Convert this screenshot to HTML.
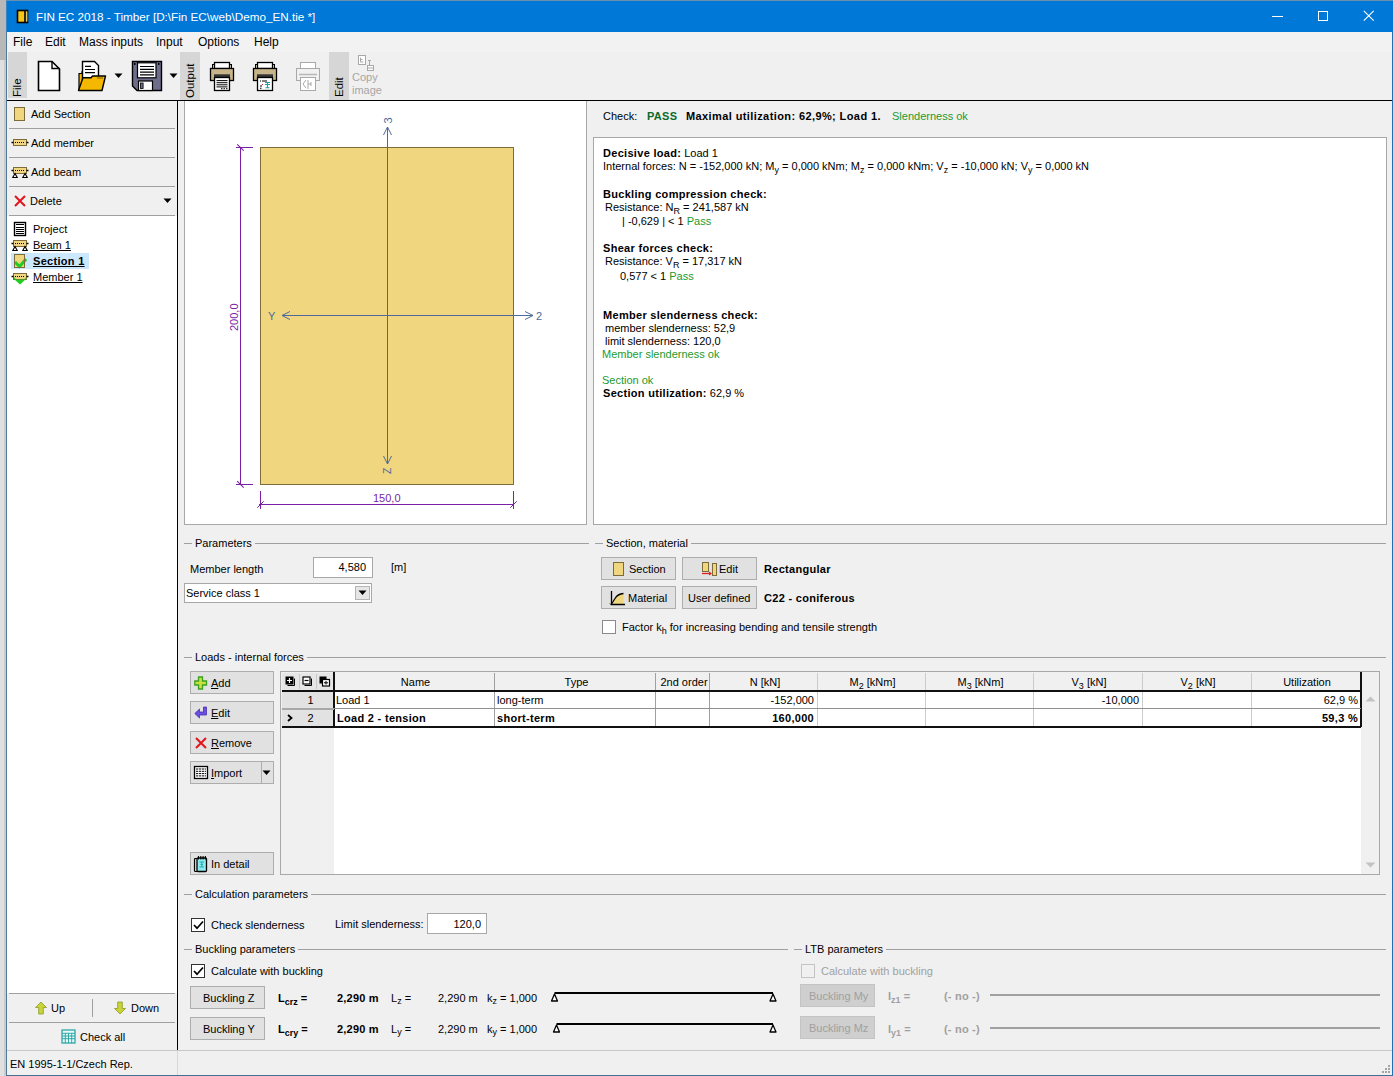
<!DOCTYPE html>
<html><head><meta charset="utf-8">
<style>
*{box-sizing:border-box;margin:0;padding:0}
html,body{width:1393px;height:1076px;overflow:hidden;background:#f0f0f0;font-family:"Liberation Sans",sans-serif;font-size:11px;color:#000}
.a{position:absolute}
.t{position:absolute;white-space:nowrap;line-height:15px;font-size:11px}
.b{font-weight:bold;letter-spacing:0.3px}
.hl{position:absolute;height:1px;background:#a0a0a0}
.vl{position:absolute;width:1px;background:#a0a0a0}
.btn{position:absolute;background:#e1e1e1;border:1px solid #adadad}
.grn{color:#1d9a2d}
sub{font-size:9px;vertical-align:-3px;line-height:0}
</style></head><body>
<!-- desktop strip -->
<div class="a" style="left:0;top:0;width:6px;height:1076px;background:#e0e0e0"></div>
<div class="a" style="left:4px;top:0;width:2px;height:1076px;background:#c9cbcd"></div>
<div class="a" style="left:0;top:0;width:6px;height:60px;background:#b8b8b8"></div>
<!-- window -->
<div class="a" style="left:6px;top:0;width:1387px;height:1076px;background:#f0f0f0;border-left:1px solid #4f7a9a;border-right:1px solid #1f70b4;border-bottom:1px solid #44708f"></div>
<!-- title bar -->
<div class="a" style="left:6px;top:0;width:1387px;height:32px;background:#0078d7;border-top:1px solid #6a90b0;border-left:1px solid #3a84c6"></div>
<div id="title" class="t" style="left:36px;top:9px;font-size:11.7px;line-height:15px;color:#fff">FIN EC 2018 - Timber [D:\Fin EC\web\Demo_EN.tie *]</div>
<!-- menu -->
<div class="a" style="left:7px;top:32px;width:1385px;height:20px;background:#f2f2f2"></div>
<div id="menu" class="t" style="left:13px;top:35px;font-size:12px;line-height:14px">
<span class="a" style="left:0">File</span><span class="a" style="left:32px">Edit</span><span class="a" style="left:66px">Mass inputs</span><span class="a" style="left:143px">Input</span><span class="a" style="left:185px">Options</span><span class="a" style="left:241px">Help</span></div>
<!-- toolbar line -->
<div class="a" style="left:7px;top:100px;width:1385px;height:1px;background:#000"></div>
<!-- left panel -->
<div class="a" style="left:7px;top:101px;width:170px;height:949px;background:#f0f0f0"></div>
<div class="a" style="left:177px;top:101px;width:1px;height:949px;background:#000"></div>
<div class="a" style="left:7px;top:216px;width:170px;height:777px;background:#fff"></div>
<div class="hl" style="left:9px;top:128px;width:166px"></div>
<div class="hl" style="left:9px;top:157px;width:166px"></div>
<div class="hl" style="left:9px;top:186px;width:166px"></div>
<div class="hl" style="left:9px;top:215px;width:166px"></div>
<div class="hl" style="left:9px;top:993px;width:166px"></div>
<div class="hl" style="left:9px;top:1022px;width:166px"></div>
<div class="vl" style="left:92px;top:999px;height:18px"></div>
<!-- status bar -->
<div class="a" style="left:7px;top:1050px;width:1385px;height:1px;background:#c8c8c8"></div>
<div class="a" style="left:177px;top:1051px;width:1px;height:24px;background:#d8d8d8"></div>
<!-- drawing panel -->
<div class="a" style="left:184px;top:101px;width:403px;height:424px;background:#fff;border:1px solid #a8a8a8;border-top:none"></div>
<!-- check text panel -->
<div class="a" style="left:593px;top:137px;width:794px;height:388px;background:#fff;border:1px solid #a8a8a8"></div>
<!-- group lines -->
<div class="hl" style="left:184px;top:543px;width:405px;background:#a0a0a0"></div>
<div class="hl" style="left:595px;top:543px;width:791px;background:#a0a0a0"></div>
<div class="hl" style="left:184px;top:657px;width:1202px;background:#a0a0a0"></div>
<div class="hl" style="left:184px;top:894px;width:1202px;background:#a0a0a0"></div>
<div class="hl" style="left:184px;top:949px;width:604px;background:#a0a0a0"></div>
<div class="hl" style="left:794px;top:949px;width:592px;background:#a0a0a0"></div>
<!-- table -->

<!-- LEFT PANEL TEXT -->
<div class="t" style="left:31px;top:107px">Add Section</div>
<div class="t" style="left:31px;top:136px">Add member</div>
<div class="t" style="left:31px;top:165px">Add beam</div>
<div class="t" style="left:30px;top:194px">Delete</div>
<div class="t" style="left:33px;top:222px">Project</div>
<div class="t" style="left:33px;top:238px;text-decoration:underline">Beam 1</div>
<div class="a" style="left:11px;top:253px;width:78px;height:16px;background:#cce8ff"></div>
<div class="t b" style="left:33px;top:254px;text-decoration:underline">Section 1</div>
<div class="t" style="left:33px;top:270px;text-decoration:underline">Member 1</div>
<div class="t" style="left:51px;top:1001px">Up</div>
<div class="t" style="left:131px;top:1001px">Down</div>
<div class="t" style="left:80px;top:1030px">Check all</div>
<div class="t" style="left:10px;top:1057px">EN 1995-1-1/Czech Rep.</div>
<!-- CHECK HEADER -->
<div class="t" style="left:603px;top:109px">Check:</div>
<div class="t b" style="left:647px;top:109px;color:#0d6b2a">PASS</div>
<div class="t b" style="left:686px;top:109px;letter-spacing:0.4px">Maximal utilization: 62,9%; Load 1.</div>
<div class="t grn" style="left:892px;top:109px">Slenderness ok</div>
<!-- CHECK TEXT -->
<div class="t" style="left:603px;top:146px"><span class="b">Decisive load:</span> Load 1</div>
<div class="t" style="left:603px;top:159px">Internal forces: N = -152,000 kN; M<sub>y</sub> = 0,000 kNm; M<sub>z</sub> = 0,000 kNm; V<sub>z</sub> = -10,000 kN; V<sub>y</sub> = 0,000 kN</div>
<div class="t b" style="left:603px;top:187px">Buckling compression check:</div>
<div class="t" style="left:605px;top:200px">Resistance: N<sub>R</sub> = 241,587 kN</div>
<div class="t" style="left:622px;top:214px">| -0,629 | &lt; 1 <span class="grn">Pass</span></div>
<div class="t b" style="left:603px;top:241px">Shear forces check:</div>
<div class="t" style="left:605px;top:254px">Resistance: V<sub>R</sub> = 17,317 kN</div>
<div class="t" style="left:620px;top:269px">0,577 &lt; 1 <span class="grn">Pass</span></div>
<div class="t b" style="left:603px;top:308px">Member slenderness check:</div>
<div class="t" style="left:605px;top:321px">member slenderness: 52,9</div>
<div class="t" style="left:605px;top:334px">limit slenderness: 120,0</div>
<div class="t grn" style="left:602px;top:347px">Member slenderness ok</div>
<div class="t grn" style="left:602px;top:373px">Section ok</div>
<div class="t" style="left:603px;top:386px"><span class="b">Section utilization:</span> 62,9 %</div>
<!-- PARAMETERS -->
<div class="t" style="left:192px;top:536px;background:#f0f0f0;padding:0 3px">Parameters</div>
<div class="t" style="left:190px;top:562px">Member length</div>
<div class="a" style="left:313px;top:557px;width:60px;height:21px;background:#fff;border:1px solid #a8a8a8"></div>
<div class="t" style="left:313px;top:560px;width:53px;text-align:right">4,580</div>
<div class="t" style="left:391px;top:560px">[m]</div>
<div class="a" style="left:184px;top:583px;width:188px;height:20px;background:#fff;border:1px solid #a8a8a8"></div>
<div class="t" style="left:186px;top:586px">Service class 1</div>
<div class="t" style="left:603px;top:536px;background:#f0f0f0;padding:0 3px">Section, material</div>
<div class="btn" style="left:601px;top:557px;width:75px;height:23px"></div>
<div class="btn" style="left:682px;top:557px;width:75px;height:23px"></div>
<div class="btn" style="left:601px;top:586px;width:75px;height:23px"></div>
<div class="btn" style="left:682px;top:586px;width:75px;height:23px"></div>
<div class="t" style="left:629px;top:562px">Section</div>
<div class="t" style="left:719px;top:562px">Edit</div>
<div class="t" style="left:628px;top:591px">Material</div>
<div class="t" style="left:688px;top:591px">User defined</div>
<div class="t b" style="left:764px;top:562px">Rectangular</div>
<div class="t b" style="left:764px;top:591px">C22 - coniferous</div>
<div class="a" style="left:602px;top:620px;width:14px;height:14px;background:#fff;border:1px solid #8a8a8a"></div>
<div class="t" style="left:622px;top:620px">Factor k<sub>h</sub> for increasing bending and tensile strength</div>
<!-- LOADS -->
<div class="t" style="left:192px;top:650px;background:#f0f0f0;padding:0 3px">Loads - internal forces</div>
<div class="btn" style="left:190px;top:671px;width:84px;height:23px"></div>
<div class="btn" style="left:190px;top:701px;width:84px;height:23px"></div>
<div class="btn" style="left:190px;top:731px;width:84px;height:23px"></div>
<div class="btn" style="left:190px;top:761px;width:84px;height:23px"></div>
<div class="btn" style="left:190px;top:852px;width:84px;height:23px"></div>
<div class="t" style="left:211px;top:676px"><u>A</u>dd</div>
<div class="t" style="left:211px;top:706px"><u>E</u>dit</div>
<div class="t" style="left:211px;top:736px"><u>R</u>emove</div>
<div class="t" style="left:211px;top:766px"><u>I</u>mport</div>
<div class="t" style="left:211px;top:857px">In detail</div>
<!-- TABLE -->
<div class="a" style="left:280px;top:671px;width:1100px;height:204px;background:#f0f0f0;border:1px solid #a8a8a8"></div>
<div class="a" style="left:334px;top:672px;width:1027px;height:202px;background:#fff"></div>
<div class="a" style="left:282px;top:673px;width:51px;height:17px;background:#e6e6e6"></div>
<div class="a" style="left:334px;top:672px;width:1027px;height:18px;background:#f0f0f0"></div>
<div class="a" style="left:282px;top:691px;width:51px;height:35px;background:#e2e2e2"></div>
<div class="a" style="left:299px;top:674px;width:1px;height:15px;background:#c8c8c8"></div>
<div class="a" style="left:316px;top:674px;width:1px;height:15px;background:#c8c8c8"></div>
<div class="a" style="left:494px;top:673px;width:1px;height:53px;background:#a0a0a0"></div>
<div class="a" style="left:655px;top:673px;width:1px;height:53px;background:#a0a0a0"></div>
<div class="a" style="left:709px;top:673px;width:1px;height:53px;background:#a0a0a0"></div>
<div class="a" style="left:817px;top:673px;width:1px;height:53px;background:#cccccc"></div>
<div class="a" style="left:925px;top:673px;width:1px;height:53px;background:#cccccc"></div>
<div class="a" style="left:1033px;top:673px;width:1px;height:53px;background:#cccccc"></div>
<div class="a" style="left:1142px;top:673px;width:1px;height:53px;background:#cccccc"></div>
<div class="a" style="left:1251px;top:673px;width:1px;height:53px;background:#cccccc"></div>
<div class="a" style="left:333px;top:672px;width:2px;height:55px;background:#111"></div>
<div class="a" style="left:1360px;top:672px;width:2px;height:55px;background:#111"></div>
<div class="a" style="left:282px;top:690px;width:1079px;height:2px;background:#111"></div>
<div class="a" style="left:282px;top:708px;width:52px;height:2px;background:#a8a8a8"></div>
<div class="a" style="left:334px;top:708px;width:1027px;height:1px;background:#909090"></div>
<div class="a" style="left:282px;top:726px;width:1079px;height:2px;background:#111"></div>
<div class="t" style="left:336px;top:675px;width:159px;text-align:center">Name</div>
<div class="t" style="left:497px;top:675px;width:159px;text-align:center">Type</div>
<div class="t" style="left:658px;top:675px;width:52px;text-align:center">2nd order</div>
<div class="t" style="left:712px;top:675px;width:106px;text-align:center">N [kN]</div>
<div class="t" style="left:820px;top:675px;width:105px;text-align:center">M<sub>2</sub> [kNm]</div>
<div class="t" style="left:927px;top:675px;width:107px;text-align:center">M<sub>3</sub> [kNm]</div>
<div class="t" style="left:1036px;top:675px;width:106px;text-align:center">V<sub>3</sub> [kN]</div>
<div class="t" style="left:1144px;top:675px;width:108px;text-align:center">V<sub>2</sub> [kN]</div>
<div class="t" style="left:1254px;top:675px;width:106px;text-align:center">Utilization</div>
<div class="t" style="left:282px;top:693px;width:51px;text-align:center;padding-left:6px">1</div>
<div class="t" style="left:282px;top:711px;width:51px;text-align:center;padding-left:6px">2</div>
<svg class="a" style="left:287px;top:714px" width="6" height="8"><path d="M1 1L4.5 4L1 7" fill="none" stroke="#000" stroke-width="1.8"/></svg>
<div class="t" style="left:336px;top:693px">Load 1</div>
<div class="t" style="left:497px;top:693px">long-term</div>
<div class="t" style="left:709px;top:693px;width:105px;text-align:right">-152,000</div>
<div class="t" style="left:1034px;top:693px;width:105px;text-align:right">-10,000</div>
<div class="t" style="left:1252px;top:693px;width:106px;text-align:right">62,9 %</div>
<div class="t b" style="left:337px;top:711px">Load 2 - tension</div>
<div class="t b" style="left:497px;top:711px">short-term</div>
<div class="t b" style="left:709px;top:711px;width:105px;text-align:right">160,000</div>
<div class="t b" style="left:1252px;top:711px;width:106px;text-align:right">59,3 %</div>
<svg class="a" style="left:285px;top:676px" width="12" height="11" viewBox="0 0 12 11">
<rect x="0.5" y="0.5" width="8" height="8" fill="#000"/><path d="M4.5 2V7M2 4.5H7" stroke="#fff" stroke-width="1.2"/>
<path d="M9.5 2.5V9.5H2.5" fill="none" stroke="#000" stroke-width="1"/></svg>
<svg class="a" style="left:302px;top:676px" width="12" height="11" viewBox="0 0 12 11">
<rect x="1" y="1" width="7" height="7" fill="#fff" stroke="#000" stroke-width="1.2"/><path d="M2.5 4.5H6.5" stroke="#000" stroke-width="1.2"/>
<path d="M9.5 2.5V9.5H2.5" fill="none" stroke="#000" stroke-width="1"/></svg>
<svg class="a" style="left:319px;top:676px" width="12" height="11" viewBox="0 0 12 11">
<rect x="0.5" y="0.5" width="7" height="7" fill="#000"/><rect x="3.5" y="3.5" width="7" height="6.5" fill="#fff" stroke="#000" stroke-width="1.2"/>
<path d="M5 6.8H9M7 5V8.5" stroke="#000" stroke-width="1"/></svg>
<svg class="a" style="left:1365px;top:696px" width="11" height="6"><path d="M0.5 5.5L5.5 0.5L10.5 5.5Z" fill="#c2c2c2"/></svg>
<svg class="a" style="left:1365px;top:862px" width="11" height="6"><path d="M0.5 0.5L5.5 5.5L10.5 0.5Z" fill="#c2c2c2"/></svg>
<!-- CALC PARAMS -->
<div class="t" style="left:192px;top:887px;background:#f0f0f0;padding:0 3px">Calculation parameters</div>
<div class="a" style="left:191px;top:918px;width:14px;height:14px;background:#fff;border:1px solid #333"></div>
<div class="t" style="left:211px;top:918px">Check slenderness</div>
<div class="t" style="left:335px;top:917px">Limit slenderness:</div>
<div class="a" style="left:427px;top:913px;width:60px;height:21px;background:#fff;border:1px solid #a8a8a8"></div>
<div class="t" style="left:427px;top:917px;width:54px;text-align:right">120,0</div>
<div class="t" style="left:192px;top:942px;background:#f0f0f0;padding:0 3px">Buckling parameters</div>
<div class="t" style="left:802px;top:942px;background:#f0f0f0;padding:0 3px">LTB parameters</div>
<div class="a" style="left:191px;top:964px;width:14px;height:14px;background:#fff;border:1px solid #333"></div>
<div class="t" style="left:211px;top:964px">Calculate with buckling</div>
<div class="a" style="left:801px;top:964px;width:14px;height:14px;background:#f0f0f0;border:1px solid #c4c4c4"></div>
<div class="t" style="left:821px;top:964px;color:#a0a0a0">Calculate with buckling</div>
<div class="btn" style="left:190px;top:986px;width:75px;height:23px"></div>
<div class="btn" style="left:190px;top:1017px;width:75px;height:23px"></div>
<div class="t" style="left:203px;top:991px">Buckling Z</div>
<div class="t" style="left:203px;top:1022px">Buckling Y</div>
<div class="btn" style="left:800px;top:984px;width:75px;height:23px;background:#cfcfcf;border-color:#c4c4c4"></div>
<div class="btn" style="left:800px;top:1016px;width:75px;height:23px;background:#cfcfcf;border-color:#c4c4c4"></div>
<div class="t" style="left:809px;top:989px;color:#a0a0a0">Buckling My</div>
<div class="t" style="left:809px;top:1021px;color:#a0a0a0">Buckling Mz</div>

<!-- TITLE ICON + BUTTONS -->
<svg class="a" style="left:16px;top:9px" width="14" height="15" viewBox="0 0 14 15">
<rect x="1.5" y="1.5" width="10" height="12" fill="#f5c518" stroke="#000" stroke-width="1.6"/>
<rect x="8.2" y="2" width="1.6" height="11" fill="#000"/>
<rect x="10" y="2.5" width="1.4" height="10" fill="#e8c870"/>
</svg>
<svg class="a" style="left:1272px;top:15px" width="12" height="3"><rect x="0" y="1" width="11" height="1" fill="#fff"/></svg>
<svg class="a" style="left:1317px;top:10px" width="12" height="12"><rect x="1.5" y="1.5" width="9" height="9" fill="none" stroke="#fff" stroke-width="1"/></svg>
<svg class="a" style="left:1363px;top:10px" width="12" height="12"><path d="M0.8 0.8L10.7 10.7M10.7 0.8L0.8 10.7" stroke="#fff" stroke-width="1.1"/></svg>
<!-- TOOLBAR -->
<div class="a" style="left:8px;top:52px;width:19px;height:46px;background:#d6d6d6"></div>
<div class="t" style="left:0px;top:0px;font-size:11.5px;line-height:14px;transform-origin:0 0;transform:translate(10px,97px) rotate(-90deg)">File</div>
<div class="a" style="left:180px;top:52px;width:20px;height:48px;background:#d6d6d6"></div>
<div class="t" style="left:0px;top:0px;font-size:11.5px;line-height:14px;transform-origin:0 0;transform:translate(183px,98px) rotate(-90deg)">Output</div>
<div class="a" style="left:329px;top:52px;width:20px;height:48px;background:#d6d6d6"></div>
<div class="t" style="left:0px;top:0px;font-size:11.5px;line-height:14px;transform-origin:0 0;transform:translate(332px,97px) rotate(-90deg)">Edit</div>
<!-- new doc -->
<svg class="a" style="left:37px;top:60px" width="25" height="32" viewBox="0 0 25 32">
<path d="M1.5 1.5H15L22.5 9V30.5H1.5Z" fill="#fff" stroke="#000" stroke-width="1.6" stroke-linejoin="miter"/>
<path d="M15 1.5V8.5H22.5" fill="none" stroke="#000" stroke-width="1.4"/>
</svg>
<!-- open folder -->
<svg class="a" style="left:77px;top:60px" width="31" height="32" viewBox="0 0 31 32">
<path d="M2 13.5H5V11.8H7V30.5H2Z" fill="#f5b800" stroke="#000" stroke-width="1.2"/>
<path d="M5.5 1.5H17.5L21.5 5.5V20H5.5Z" fill="#fff" stroke="#000" stroke-width="1.4"/>
<path d="M8 6.3H14M8 9.5H18M8 12.7H18" stroke="#000" stroke-width="1.2"/>
<path d="M1.5 30.5L6 17.8H14L15.5 16H28.5L25 30.5Z" fill="#f5b800" stroke="#000" stroke-width="1.4" stroke-linejoin="round"/>
<path d="M20 18H26" stroke="#7a6000" stroke-width="1"/>
</svg>
<svg class="a" style="left:114px;top:73px" width="9" height="6"><path d="M0.5 0.5H8.5L4.5 5Z" fill="#000"/></svg>
<!-- floppy -->
<svg class="a" style="left:131px;top:60px" width="32" height="32" viewBox="0 0 32 32">
<path d="M1.5 1.5H30.5V30.5H6L1.5 26Z" fill="#6e6e8c" stroke="#000" stroke-width="1.4"/>
<rect x="6.5" y="2.8" width="18.5" height="15" fill="#fff" stroke="#000" stroke-width="1.2"/>
<path d="M9 6.5H23M9 9.3H23M9 12.1H23M9 14.9H23" stroke="#000" stroke-width="1.2"/>
<rect x="7.5" y="21" width="14" height="9.5" fill="#fff" stroke="#000" stroke-width="1.2"/>
<rect x="9.5" y="23" width="2.6" height="5.5" fill="#6e6e8c" stroke="#000" stroke-width="0.8"/>
<rect x="3" y="3" width="1.5" height="2" fill="#000"/><rect x="27" y="3" width="1.5" height="2" fill="#000"/>
</svg>
<svg class="a" style="left:169px;top:73px" width="9" height="6"><path d="M0.5 0.5H8.5L4.5 5Z" fill="#000"/></svg>
<!-- printers -->
<svg class="a" style="left:209px;top:61px" width="26" height="31" viewBox="0 0 26 31">
<rect x="3.5" y="3.5" width="19" height="5" fill="#e0d8c4" stroke="#000" stroke-width="1"/>
<rect x="5.5" y="1.5" width="15" height="6" fill="#fff" stroke="#000" stroke-width="1.3"/>
<rect x="1.5" y="7.5" width="23" height="12" fill="#c8b48a" stroke="#000" stroke-width="1.3"/>
<rect x="5" y="13.3" width="16" height="3" fill="#333"/>
<rect x="5.5" y="16.5" width="15" height="13" fill="#fff" stroke="#000" stroke-width="1.3"/>
<path d="M7.5 19.6H18.5M7.5 21.7H18.5M7.5 23.8H18.5M7.5 25.9H18.5" stroke="#000" stroke-width="1"/>
<path d="M12 27.7H13.5M14.5 27.7H16M17 27.7H18.5" stroke="#000" stroke-width="1"/>
</svg>
<svg class="a" style="left:252px;top:61px" width="26" height="31" viewBox="0 0 26 31">
<rect x="3.5" y="3.5" width="19" height="5" fill="#e0d8c4" stroke="#000" stroke-width="1"/>
<rect x="5.5" y="1.5" width="15" height="6" fill="#fff" stroke="#000" stroke-width="1.3"/>
<rect x="1.5" y="7.5" width="23" height="12" fill="#c8b48a" stroke="#000" stroke-width="1.3"/>
<rect x="5" y="13.3" width="16" height="3" fill="#333"/>
<rect x="5.5" y="16.5" width="15" height="13" fill="#fff" stroke="#000" stroke-width="1.3"/>
<path d="M8 20H9M10 20H15M8 25H10M8 27.3H9.5" stroke="#000" stroke-width="1.1"/>
<path d="M13 21.5H18M15.5 21.5V26.5M13.5 26.8H17.5M13 23.5H18" stroke="#20a0a0" stroke-width="1.1"/>
<path d="M10 23.5H11" stroke="#c02040" stroke-width="1"/>
</svg>
<svg class="a" style="left:295px;top:61px" width="26" height="31" viewBox="0 0 26 31">
<rect x="5.5" y="1.5" width="15" height="6" fill="#fff" stroke="#a8a8a8" stroke-width="1"/>
<rect x="1.5" y="7.5" width="23" height="12" fill="#f0f0f0" stroke="#a8a8a8" stroke-width="1"/>
<path d="M4 13.5H22" stroke="#b8b8b8" stroke-width="1.5"/>
<rect x="5.5" y="16.5" width="15" height="13" fill="#fff" stroke="#a8a8a8" stroke-width="1"/>
<path d="M11 19L8 23L11 27M13 19V28M13 23H16M16 21V25" fill="none" stroke="#a8a8a8" stroke-width="1"/>
</svg>
<svg class="a" style="left:357px;top:54px" width="18" height="18" viewBox="0 0 18 18">
<rect x="1.5" y="1.5" width="7" height="9" fill="#fff" stroke="#a8a8a8" stroke-width="1"/>
<path d="M3.5 3.5V8H6.5M3.5 5.5H5.5" fill="none" stroke="#a8a8a8" stroke-width="1"/>
<path d="M11 6.5H14M12.5 6.5V11.5" stroke="#a8a8a8" stroke-width="1"/>
<rect x="10.5" y="11.5" width="6" height="5" fill="#fff" stroke="#a8a8a8" stroke-width="1"/>
<path d="M11 14H16" stroke="#a8a8a8" stroke-width="1"/>
</svg>
<div class="t" style="left:352px;top:71px;font-size:11px;line-height:13px;color:#a6a6a6">Copy</div>
<div class="t" style="left:352px;top:84px;font-size:11px;line-height:13px;color:#a6a6a6">image</div>

<!-- LEFT ICONS -->
<svg class="a" style="left:13px;top:106px" width="13" height="16"><rect x="1.5" y="1.5" width="10" height="13" fill="#f0d67e" stroke="#7d6b3a" stroke-width="1"/></svg>
<svg class="a" style="left:11px;top:138px" width="18" height="10" viewBox="0 0 18 10">
<rect x="2.5" y="1.5" width="13" height="6" fill="#f0d67e" stroke="#7d6b3a" stroke-width="1"/>
<path d="M0.5 4.5H2.5M15.5 4.5H17.5" stroke="#000" stroke-width="1.4"/>
<path d="M4 4.5H14" stroke="#000" stroke-width="1" stroke-dasharray="1 1"/>
</svg>
<svg class="a" style="left:11px;top:166px" width="18" height="13" viewBox="0 0 18 13">
<rect x="2.5" y="1.5" width="13" height="6" fill="#f0d67e" stroke="#7d6b3a" stroke-width="1"/>
<path d="M0.5 4.5H2.5M15.5 4.5H17.5" stroke="#000" stroke-width="1.4"/>
<path d="M4 4.5H14" stroke="#000" stroke-width="1" stroke-dasharray="1 1"/>
<path d="M4 7.5L1.8 11.5H6.2ZM14 7.5L11.8 11.5H16.2Z" fill="#fff" stroke="#000" stroke-width="1.1"/>
</svg>
<svg class="a" style="left:14px;top:195px" width="12" height="12"><path d="M1 1L11 11M11 1L1 11" stroke="#e3141c" stroke-width="2"/></svg>
<svg class="a" style="left:163px;top:198px" width="9" height="6"><path d="M0.5 0.5H8.5L4.5 5Z" fill="#000"/></svg>
<svg class="a" style="left:13px;top:221px" width="14" height="16" viewBox="0 0 14 16">
<rect x="1.5" y="1.5" width="11" height="13" fill="#fff" stroke="#000" stroke-width="1.4"/>
<path d="M3 3.5H11M3 6.5H11M3 8.5H11M3 10.5H11M3 12.5H11" stroke="#000" stroke-width="1"/>
</svg>
<svg class="a" style="left:11px;top:239px" width="18" height="13" viewBox="0 0 18 13">
<rect x="2.5" y="1.5" width="13" height="6" fill="#f0d67e" stroke="#7d6b3a" stroke-width="1"/>
<path d="M0.5 4.5H2.5M15.5 4.5H17.5" stroke="#000" stroke-width="1.4"/>
<path d="M4 4.5H14" stroke="#000" stroke-width="1" stroke-dasharray="1 1"/>
<path d="M4 7.5L1.8 11.5H6.2ZM14 7.5L11.8 11.5H16.2Z" fill="#fff" stroke="#000" stroke-width="1.1"/>
</svg>
<svg class="a" style="left:13px;top:253px" width="14" height="16" viewBox="0 0 14 16">
<rect x="1.5" y="1.5" width="10" height="13" fill="#f0d67e" stroke="#7d6b3a" stroke-width="1"/>
<path d="M2 9L6.5 13.5L13 6" fill="none" stroke="#22cc22" stroke-width="3"/>
<rect x="1.5" y="1.5" width="10" height="13" fill="none" stroke="#7d6b3a" stroke-width="1"/>
</svg>
<svg class="a" style="left:11px;top:272px" width="18" height="14" viewBox="0 0 18 14">
<rect x="2.5" y="1.5" width="13" height="6" fill="#f0d67e" stroke="#7d6b3a" stroke-width="1"/>
<path d="M3 5L9 12L15.5 5V7.5H3Z" fill="#22cc22"/>
<path d="M4 8L9 12.5L14 8" fill="#22cc22"/>
<path d="M0.5 4.5H2.5M15.5 4.5H17.5" stroke="#000" stroke-width="1.4"/>
<path d="M4 4.5H14" stroke="#000" stroke-width="1" stroke-dasharray="1 1"/>
</svg>
<!-- Up/Down/Check all icons -->
<svg class="a" style="left:34px;top:1001px" width="14" height="14" viewBox="0 0 14 14">
<path d="M7 1L12.5 6.5H9.3V13H4.7V6.5H1.5Z" fill="#c8d43a" stroke="#8a9a20" stroke-width="0.8"/>
</svg>
<svg class="a" style="left:113px;top:1001px" width="14" height="14" viewBox="0 0 14 14">
<path d="M7 13L12.5 7.5H9.3V1H4.7V7.5H1.5Z" fill="#c8d43a" stroke="#8a9a20" stroke-width="0.8"/>
</svg>
<svg class="a" style="left:61px;top:1029px" width="15" height="15" viewBox="0 0 15 15">
<rect x="1" y="1" width="13" height="13" fill="#e8f8f8" stroke="#20a0a0" stroke-width="1.2"/>
<path d="M1 4.3H14M1 7H14M1 9.7H14M4.3 4.3V14M7.5 4.3V14M10.7 4.3V14" stroke="#20a0a0" stroke-width="0.9"/>
</svg>
<!-- DRAWING -->
<svg class="a" style="left:184px;top:101px" width="403" height="424" viewBox="184 101 403 424">
<rect x="260.5" y="147.5" width="253" height="337" fill="#f0d67e" stroke="#7d6b3a" stroke-width="1"/>
<g stroke="#4f6a9a" stroke-width="1" fill="none">
<path d="M387.5 127V464M282 315.5H533"/>
<path d="M383.5 135L387.5 127L391.5 135M383.5 456L387.5 464L391.5 456M290 311.5L282 315.5L290 319.5M525 311.5L533 315.5L525 319.5"/>
</g>
<g fill="#4f6a9a" font-family="Liberation Sans" font-size="11">
<text x="268" y="319.5">Y</text>
<text x="536" y="320">2</text>
<text transform="translate(391.5 123.5) rotate(-90)" font-size="11">3</text>
<text transform="translate(391 474) rotate(-90)" font-size="10.5">Z</text>
</g>
<g stroke="#7a1fa8" stroke-width="1" fill="none">
<path d="M240.5 147V484M236 147.5H253M236 484.5H253"/>
<path d="M237.2 144.3L243.7 150.7M237.2 481.2L243.7 487.7" stroke-width="1.1"/>
<path d="M259 504.5H514M260.5 491V509M513.5 491V509M257.3 507.7L263.7 501.3M510.3 507.7L516.7 501.3"/>
</g>
<g fill="#7a1fa8" font-family="Liberation Sans" font-size="11">
<text x="373" y="502">150,0</text>
<text transform="translate(238 331) rotate(-90)">200,0</text>
</g>
</svg>

<!-- BUTTON ICONS -->
<svg class="a" style="left:194px;top:676px" width="14" height="14" viewBox="0 0 14 14">
<path d="M4.5 1H8.5V5H12.5V9H8.5V13H4.5V9H0.8V5H4.5Z" fill="#c8e040" stroke="#3aa020" stroke-width="1.3"/>
</svg>
<svg class="a" style="left:194px;top:706px" width="14" height="13" viewBox="0 0 14 13">
<path d="M9.5 1H12.5V9H5.5V12L0.8 7.5L5.5 3V6H9.5Z" fill="#6a4ee0" stroke="#4a30b0" stroke-width="0.8"/>
</svg>
<svg class="a" style="left:195px;top:737px" width="12" height="12"><path d="M1 1L11 11M11 1L1 11" stroke="#e3141c" stroke-width="2"/></svg>
<svg class="a" style="left:193px;top:765px" width="16" height="15" viewBox="0 0 16 15">
<rect x="1.5" y="1.5" width="13" height="12" fill="#fff" stroke="#000" stroke-width="1.3"/>
<path d="M3 4H13M3 6.3H13M3 8.6H13M3 10.9H13" stroke="#000" stroke-width="1" stroke-dasharray="2.3 0.7"/>
</svg>
<div class="a" style="left:261px;top:762px;width:1px;height:21px;background:#adadad"></div>
<svg class="a" style="left:262px;top:770px" width="9" height="6"><path d="M0.5 0.5H8.5L4.5 5Z" fill="#000"/></svg>
<svg class="a" style="left:193px;top:855px" width="16" height="18" viewBox="0 0 16 18">
<path d="M4 3.5H2.5Q1.5 3.5 1.5 4.5V15.5Q1.5 16.5 2.5 16.5H4" fill="none" stroke="#000" stroke-width="1.2"/>
<rect x="4" y="3" width="9.5" height="13.5" rx="1" fill="#8eeaf0" stroke="#000" stroke-width="1.3"/>
<path d="M5.5 1V4.5M7.8 1V4.5M10.1 1V4.5M12.4 1V4.5" stroke="#000" stroke-width="1.1"/>
<path d="M6.5 7H11M7.5 9.5H10M6.5 12H11M8.8 7V12" stroke="#20b0b0" stroke-width="1.1"/>
</svg>
<svg class="a" style="left:612px;top:561px" width="13" height="16"><rect x="1.5" y="1.5" width="10" height="13" fill="#f0d67e" stroke="#7d6b3a" stroke-width="1"/></svg>
<svg class="a" style="left:701px;top:561px" width="17" height="16" viewBox="0 0 17 16">
<rect x="1.5" y="1.5" width="6" height="9" fill="#f0d67e" stroke="#7d6b3a" stroke-width="1"/>
<rect x="11.5" y="2.5" width="4" height="12" fill="#f0d67e" stroke="#7d6b3a" stroke-width="1"/>
<path d="M1 12.5H10" stroke="#e02020" stroke-width="1.3"/><path d="M8 10.5L11 12.5L8 14.5Z" fill="#e02020"/>
</svg>
<svg class="a" style="left:609px;top:590px" width="17" height="16" viewBox="0 0 17 16">
<path d="M2.5 14L6 8.5Q8.5 4 14.5 3.5V14Z" fill="#f0d67e"/>
<path d="M2.5 1V14.5H16" fill="none" stroke="#000" stroke-width="1.3"/>
<path d="M2.5 14L6 8.5Q8.5 4 14.5 3.5" fill="none" stroke="#000" stroke-width="1.3"/>
<path d="M1 13.5L2.5 15" stroke="#000" stroke-width="1"/>
</svg>
<!-- checkmarks -->
<svg class="a" style="left:193px;top:920px" width="11" height="10"><path d="M1 5L4 8.2L10 1.5" fill="none" stroke="#000" stroke-width="1.7"/></svg>
<svg class="a" style="left:193px;top:966px" width="11" height="10"><path d="M1 5L4 8.2L10 1.5" fill="none" stroke="#000" stroke-width="1.7"/></svg>
<!-- dropdown arrow service class -->
<div class="a" style="left:355px;top:586px;width:15px;height:14px;background:#e6e6e6;border:1px solid #b4b4b4"></div>
<svg class="a" style="left:358px;top:590px" width="9" height="6"><path d="M0.5 0.5H8.5L4.5 5Z" fill="#000"/></svg>

<!-- BUCKLING ROWS -->
<div class="t b" style="left:278px;top:991px;letter-spacing:0">L<sub style="font-size:9px;vertical-align:-3px">crz</sub> =</div>
<div class="t b" style="left:337px;top:991px;letter-spacing:0.2px">2,290 m</div>
<div class="t" style="left:391px;top:991px">L<sub style="font-size:9px;vertical-align:-2px">z</sub> =</div>
<div class="t" style="left:438px;top:991px">2,290 m</div>
<div class="t" style="left:487px;top:991px">k<sub style="font-size:9px;vertical-align:-2px">z</sub> = 1,000</div>
<div class="t b" style="left:278px;top:1022px;letter-spacing:0">L<sub style="font-size:9px;vertical-align:-3px">cry</sub> =</div>
<div class="t b" style="left:337px;top:1022px;letter-spacing:0.2px">2,290 m</div>
<div class="t" style="left:391px;top:1022px">L<sub style="font-size:9px;vertical-align:-2px">y</sub> =</div>
<div class="t" style="left:438px;top:1022px">2,290 m</div>
<div class="t" style="left:487px;top:1022px">k<sub style="font-size:9px;vertical-align:-2px">y</sub> = 1,000</div>
<svg class="a" style="left:548px;top:990px" width="233" height="45" viewBox="548 990 233 45">
<path d="M554.5 993H773M556.5 1024H773" stroke="#000" stroke-width="2"/>
<path d="M554.5 994L551.5 1001H557.5Z M773 994L770 1001H776Z M556.5 1025L553.5 1032H559.5Z M773 1025L770 1032H776Z" fill="#fff" stroke="#000" stroke-width="1.3" stroke-linejoin="round"/>
</svg>
<div class="t b" style="left:888px;top:989px;color:#a0a0a0;letter-spacing:0">I<sub style="font-size:9px;vertical-align:-3px">z1</sub> =</div>
<div class="t b" style="left:944px;top:989px;color:#a0a0a0;letter-spacing:0.2px">(- no -)</div>
<div class="t b" style="left:888px;top:1022px;color:#a0a0a0;letter-spacing:0">I<sub style="font-size:9px;vertical-align:-3px">y1</sub> =</div>
<div class="t b" style="left:944px;top:1022px;color:#a0a0a0;letter-spacing:0.2px">(- no -)</div>
<div class="a" style="left:990px;top:994px;width:390px;height:2px;background:#a0a0a0"></div>
<div class="a" style="left:990px;top:1027px;width:390px;height:2px;background:#a0a0a0"></div>

<!-- resize grip -->
<svg class="a" style="left:1381px;top:1064px" width="11" height="11"><g fill="#a4a4a4"><rect x="7" y="1" width="2" height="2"/><rect x="4" y="4" width="2" height="2"/><rect x="7" y="4" width="2" height="2"/><rect x="1" y="7" width="2" height="2"/><rect x="4" y="7" width="2" height="2"/><rect x="7" y="7" width="2" height="2"/></g></svg>
</body></html>
